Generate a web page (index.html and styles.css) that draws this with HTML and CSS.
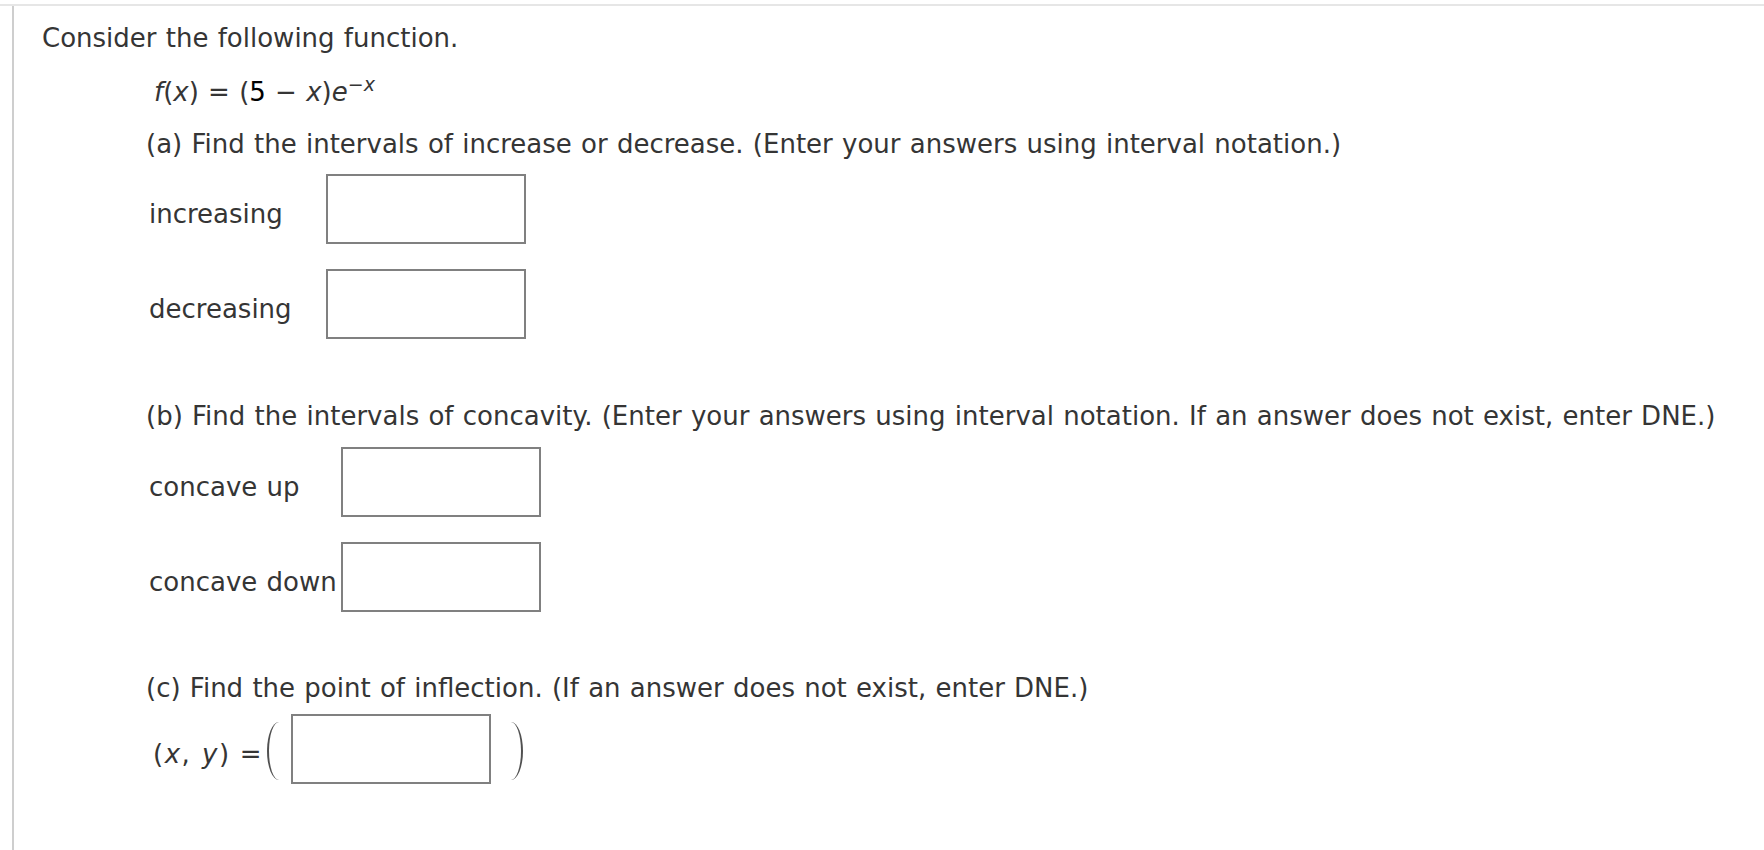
FILE: index.html
```html
<!DOCTYPE html>
<html lang="en">
<head>
<meta charset="utf-8">
<title>Consider the following function</title>
<link rel="stylesheet" href="styles.css">
</head>
<body>
<div class="page">
  <div class="panel">
    <p class="intro">Consider the following function.</p>
    <p class="func"><i>f</i>(<i>x</i>) = (<span class="num">5</span> − <i>x</i>)<i>e</i><span class="sup">−<i>x</i></span></p>

    <section class="part part-a">
      <p class="q">(a) Find the intervals of increase or decrease. (Enter your answers using interval notation.)</p>
      <div class="rows">
        <div class="row"><label class="lbl">increasing</label><input class="ans" type="text"></div>
        <div class="row"><label class="lbl">decreasing</label><input class="ans" type="text"></div>
      </div>
    </section>

    <section class="part part-b">
      <p class="q">(b) Find the intervals of concavity. (Enter your answers using interval notation. If an answer does not exist, enter DNE.)</p>
      <div class="rows">
        <div class="row"><label class="lbl">concave up</label><input class="ans" type="text"></div>
        <div class="row"><label class="lbl">concave down</label><input class="ans" type="text"></div>
      </div>
    </section>

    <section class="part part-c">
      <p class="q">(c) Find the point of inflection. (If an answer does not exist, enter DNE.)</p>
      <div class="rows">
        <div class="row"><span class="lbl xy">(<i>x</i>, <i>y</i>)<span class="eq">=</span></span><span class="paren paren-l"></span><input class="ans" type="text"><span class="paren paren-r"></span></div>
      </div>
    </section>
  </div>
</div>
</body>
</html>
```

FILE: styles.css
```css
html, body {
  margin: 0;
  padding: 0;
  background: #ffffff;
}

body {
  font-family: "DejaVu Sans", Verdana, sans-serif;
  font-size: 26px;
  line-height: 30px;
  word-spacing: 1px;
  color: #353535;
}

.page {
  margin-top: 4px;
  border-top: 2px solid #e6e6e6;
}

.panel {
  margin-left: 12px;
  border-left: 2px solid #cecece;
  min-height: 844px;
  padding: 17px 0 0 28px;
  box-sizing: border-box;
}

p {
  margin: 0;
  white-space: nowrap;
}

i {
  font-style: italic;
}

.func {
  margin: 24px 0 0 112px;
}

.num {
  color: #000000;
}

.sup {
  font-size: 19px;
  line-height: 0;
  position: relative;
  top: -10px;
}

.part {
  margin-left: 104px;
}

.part-a {
  margin-top: 22px;
}

.part-b {
  margin-top: 62px;
}

.part-c {
  margin-top: 61px;
}

.rows {
  display: flex;
  flex-direction: column;
  gap: 25px;
  margin-top: 15px;
  padding-left: 3px;
}

.part-b .rows {
  margin-top: 16px;
}

.part-c .rows {
  margin-top: 11px;
  padding-left: 7px;
}

.row {
  display: flex;
  align-items: center;
}

.lbl {
  padding-top: 10px;
  white-space: nowrap;
}

.part-a .lbl {
  width: 177px;
}

.part-b .lbl {
  width: 192px;
}

.xy {
  letter-spacing: 1.5px;
}

.eq {
  margin-left: 9px;
  letter-spacing: 0;
}

.ans {
  box-sizing: border-box;
  width: 200px;
  height: 70px;
  margin: 0;
  padding: 0 6px;
  border: 2px solid #808080;
  border-radius: 0;
  background: #ffffff;
  font: inherit;
  color: #333333;
  outline: none;
}

.paren {
  display: block;
  box-sizing: border-box;
  height: 58px;
  margin-top: 4px;
}

.paren-l {
  width: 14px;
  margin-left: 6px;
  margin-right: 10px;
  border-left: 2px solid #505050;
  border-radius: 12px 0 0 12px / 29px 0 0 29px;
}

.paren-r {
  width: 12px;
  margin-left: 20px;
  border-right: 2px solid #505050;
  border-radius: 0 12px 12px 0 / 0 29px 29px 0;
}
```
